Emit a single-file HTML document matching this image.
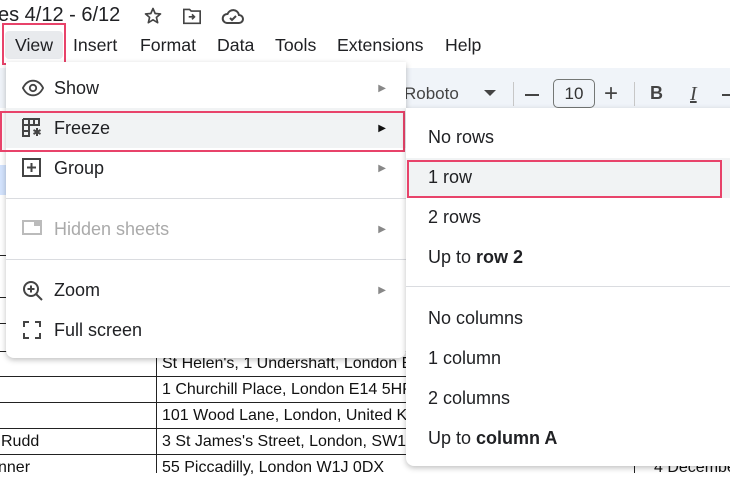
<!DOCTYPE html>
<html><head><style>
*{margin:0;padding:0;box-sizing:border-box}
body{width:730px;height:473px;overflow:hidden;background:#fff;font-family:"Liberation Sans",Arial,sans-serif;position:relative;color:#202124}
.a{position:absolute}
.mi{position:absolute;left:0;height:40px;display:flex;align-items:center;font-size:18px;color:#202124}
.mi .ic{position:absolute;left:16px;top:10px}
.mi .t{position:absolute;left:48px}
.arr{position:absolute;right:20px;font-size:10px;color:#888}
.si{position:absolute;left:22px;font-size:18px;color:#202124}
.cell{position:absolute;font-size:16px;color:#111;white-space:nowrap}
.mb{position:absolute;top:35px;font-size:17.7px;color:#202124}
</style></head><body>
<div class="a" style="left:-2px;top:4px;font-size:20px;color:#202124">es 4/12 - 6/12</div>
<svg class="a" style="left:143px;top:6px" width="20" height="20" viewBox="0 0 24 24"><path d="M12 3l2.6 6 6.4.5-4.9 4.2 1.5 6.3L12 16.6 6.4 20l1.5-6.3L3 9.5l6.4-.5z" fill="none" stroke="#444" stroke-width="2" stroke-linejoin="round"/></svg>
<svg class="a" style="left:182px;top:7px" width="20" height="18" viewBox="0 0 24 22"><path d="M2 3h7l2 2h11v15H2z" fill="none" stroke="#444" stroke-width="2"/><path d="M8 12h7M12 9l3 3-3 3" fill="none" stroke="#444" stroke-width="2"/></svg>
<svg class="a" style="left:221px;top:6px" width="24" height="20" viewBox="0 0 24 20"><path d="M6 17h12a4 4 0 0 0 0-8 6 6 0 0 0-11.5-1A4.5 4.5 0 0 0 6 17z" fill="none" stroke="#444" stroke-width="2"/><path d="M9 12l2 2 4-4" fill="none" stroke="#444" stroke-width="2"/></svg>
<div class="a" style="left:5px;top:31px;width:58px;height:28px;background:#e8eaed;border-radius:4px"></div>
<div class="a" style="left:2px;top:23px;width:64px;height:42px;border:2px solid #e8436a"></div>
<div class="mb" style="left:15px">View</div>
<div class="mb" style="left:73px">Insert</div>
<div class="mb" style="left:140px">Format</div>
<div class="mb" style="left:217px">Data</div>
<div class="mb" style="left:275px">Tools</div>
<div class="mb" style="left:337px">Extensions</div>
<div class="mb" style="left:445px">Help</div>
<div class="a" style="left:0;top:68px;width:730px;height:40px;background:#f0f4f9"></div>
<div class="a" style="left:0;top:108px;width:730px;height:57px;background:#fff"></div>
<div class="a" style="left:0;top:165px;width:8px;height:30px;background:#d3e3fd"></div>
<div class="a" style="left:404px;top:84px;font-size:17px;color:#444">Roboto</div>
<svg class="a" style="left:484px;top:90px" width="12" height="8"><path d="M0 0h12L6 6z" fill="#444"/></svg>
<div class="a" style="left:513px;top:82px;width:1px;height:24px;background:#c7c7c7"></div>
<div class="a" style="left:525px;top:94px;width:14px;height:2px;background:#444"></div>
<div class="a" style="left:553px;top:79px;width:42px;height:29px;border:1px solid #747775;border-radius:5px;font-size:17px;text-align:center;line-height:27px;color:#333">10</div>
<div class="a" style="left:604px;top:80px;font-size:24px;color:#444">+</div>
<div class="a" style="left:634px;top:82px;width:1px;height:24px;background:#c7c7c7"></div>
<div class="a" style="left:650px;top:83px;font-size:18px;font-weight:bold;color:#444">B</div>
<div class="a" style="left:690px;top:83px;font-size:20px;font-style:italic;font-family:'Liberation Serif',serif;color:#444;text-decoration:underline">I</div>
<div class="a" style="left:722px;top:94px;width:10px;height:2px;background:#444"></div>
<div class="a" style="left:0;top:255px;width:8px;height:1px;background:#222"></div>
<div class="a" style="left:0;top:297px;width:8px;height:1px;background:#222"></div>
<div class="a" style="left:0;top:323px;width:8px;height:1px;background:#222"></div>
<div class="a" style="left:0;top:351px;width:730px;height:1px;background:#222"></div>
<div class="a" style="left:0;top:376px;width:730px;height:1px;background:#222"></div>
<div class="a" style="left:0;top:402px;width:730px;height:1px;background:#222"></div>
<div class="a" style="left:0;top:428px;width:730px;height:1px;background:#222"></div>
<div class="a" style="left:0;top:454px;width:730px;height:1px;background:#222"></div>
<div class="a" style="left:156px;top:351px;width:1px;height:122px;background:#222"></div>
<div class="a" style="left:634px;top:440px;width:1px;height:33px;background:#222"></div>
<div class="cell" style="left:162px;top:355px">St Helen's, 1 Undershaft, London E</div>
<div class="cell" style="left:162px;top:381px">1 Churchill Place, London E14 5HP</div>
<div class="cell" style="left:162px;top:407px">101 Wood Lane, London, United K</div>
<div class="cell" style="left:162px;top:433px">3 St James's Street, London, SW1</div>
<div class="cell" style="left:162px;top:459px">55 Piccadilly, London W1J 0DX</div>
<div class="cell" style="left:1px;top:433px">Rudd</div>
<div class="cell" style="left:-2px;top:459px">nner</div>
<div class="cell" style="left:654px;top:459px">4 December</div>
<div class="a" style="left:6px;top:62px;width:400px;height:296px;background:#fff;border-radius:0 0 8px 8px;box-shadow:0 2px 6px rgba(0,0,0,.25)">
  <div class="mi" style="top:6px;width:400px"><svg class="ic" width="22" height="20" viewBox="0 0 24 20"><path d="M1 10C4 4 8 2 12 2s8 2 11 8c-3 6-7 8-11 8S4 16 1 10z" fill="none" stroke="#444" stroke-width="2"/><circle cx="12" cy="10" r="3.5" fill="none" stroke="#444" stroke-width="2"/></svg><span class="t">Show</span><span class="arr">▶</span></div>
  <div class="mi" style="top:46px;width:400px;background:#f1f3f4"><svg class="ic" width="20" height="20" viewBox="0 0 20 20"><path d="M1 1h16v5M1 1v17h7M1 7h17M1 13h7M7 1v17M12 1v6" fill="none" stroke="#444" stroke-width="2"/><path d="M15 10v8M11.5 12l7 4M18.5 12l-7 4" stroke="#444" stroke-width="2"/></svg><span class="t">Freeze</span><span class="arr" style="color:#111">▶</span></div>
  <div class="mi" style="top:86px;width:400px"><svg class="ic" width="20" height="20" viewBox="0 0 20 20"><rect x="1" y="1" width="17" height="17" fill="none" stroke="#444" stroke-width="2"/><path d="M9.5 5v9M5 9.5h9" stroke="#444" stroke-width="2"/></svg><span class="t">Group</span><span class="arr">▶</span></div>
  <div class="a" style="left:0;top:136px;width:400px;height:1px;background:#dadce0"></div>
  <div class="mi" style="top:147px;width:400px;color:#aaa"><svg class="ic" width="20" height="18" viewBox="0 0 20 18"><rect x="1" y="2" width="18" height="13" fill="none" stroke="#bbb" stroke-width="2"/><rect x="12" y="2" width="7" height="5" fill="#bbb"/></svg><span class="t">Hidden sheets</span><span class="arr">▶</span></div>
  <div class="a" style="left:0;top:197px;width:400px;height:1px;background:#dadce0"></div>
  <div class="mi" style="top:208px;width:400px"><svg class="ic" width="22" height="22" viewBox="0 0 22 22"><circle cx="9" cy="9" r="7" fill="none" stroke="#444" stroke-width="2"/><path d="M14 14l6 6M9 5.5v7M5.5 9h7" stroke="#444" stroke-width="2"/></svg><span class="t">Zoom</span><span class="arr">▶</span></div>
  <div class="mi" style="top:248px;width:400px"><svg class="ic" width="20" height="20" viewBox="0 0 20 20"><path d="M2 7V2h5M13 2h5v5M18 13v5h-5M7 18H2v-5" fill="none" stroke="#444" stroke-width="2"/></svg><span class="t">Full screen</span></div>
</div>
<div class="a" style="left:0;top:111px;width:405px;height:41px;border:2px solid #e8436a"></div>
<div class="a" style="left:406px;top:108px;width:340px;height:358px;background:#fff;border-radius:0 0 0 8px;box-shadow:0 2px 6px rgba(0,0,0,.25)">
  <div class="si" style="top:19px">No rows</div>
  <div class="a" style="left:0;top:50px;width:340px;height:40px;background:#f1f3f4"></div>
  <div class="si" style="top:59px">1 row</div>
  <div class="si" style="top:99px">2 rows</div>
  <div class="si" style="top:139px">Up to <b>row 2</b></div>
  <div class="a" style="left:0;top:178px;width:340px;height:1px;background:#dadce0"></div>
  <div class="si" style="top:200px">No columns</div>
  <div class="si" style="top:240px">1 column</div>
  <div class="si" style="top:280px">2 columns</div>
  <div class="si" style="top:320px">Up to <b>column A</b></div>
</div>
<div class="a" style="left:407px;top:160px;width:315px;height:38px;border:2px solid #e8436a"></div>
</body></html>
